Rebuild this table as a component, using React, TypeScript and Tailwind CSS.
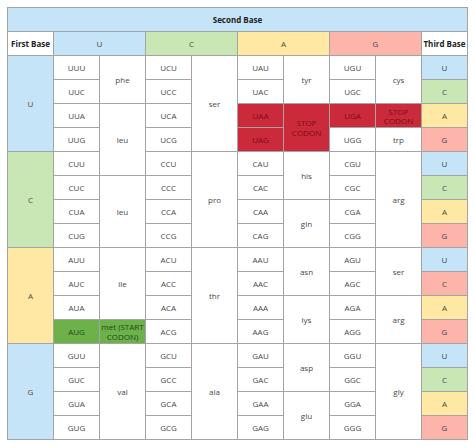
import React from "react";

const W = "bg-white";
const BL = "bg-[#c6e4f7]";
const GR = "bg-[#c9e6b5]";
const YE = "bg-[#fee8a4]";
const PK = "bg-[#fdb4aa]";
const RD = "bg-[#cb2a3a] text-[#7a0d18]";
const DG = "bg-[#6db14a] text-[#24451a]";

function C({ c = W, children }: { c?: string; children?: React.ReactNode }) {
  return (
    <div className={`flex items-center justify-center text-center px-[2px] leading-[10px] ${c}`}>
      {children}
    </div>
  );
}

export default function App() {
  return (
    <div className="w-[474px] h-[447px] bg-white p-[7px]" style={{ fontFamily: "'Open Sans', 'Liberation Sans', sans-serif" }}>
      <div className="grid grid-cols-[repeat(10,45px)] grid-rows-[repeat(18,23px)] gap-px p-px bg-[#a4a4a4] w-fit text-[8px] text-[#484848]">
        <div className={`col-span-10 flex items-center justify-center font-bold text-[#222] ${BL}`}>Second Base</div>
        <div className="flex items-center justify-center font-bold text-[#222] bg-white">First Base</div>
        <div className={`col-span-2 flex items-center justify-center ${BL}`}>U</div>
        <div className={`col-span-2 flex items-center justify-center ${GR}`}>C</div>
        <div className={`col-span-2 flex items-center justify-center ${YE}`}>A</div>
        <div className={`col-span-2 flex items-center justify-center ${PK}`}>G</div>
        <div className="flex items-center justify-center font-bold text-[#222] bg-white">Third Base</div>

        {/* U block */}
        <div className={`row-span-4 flex items-center justify-center ${BL}`}>U</div>
        <C>UUU</C>
        <div className="row-span-2 flex items-center justify-center bg-white">phe</div>
        <C>UCU</C>
        <div className="row-span-4 flex items-center justify-center bg-white">ser</div>
        <C>UAU</C>
        <div className="row-span-2 flex items-center justify-center bg-white">tyr</div>
        <C>UGU</C>
        <div className="row-span-2 flex items-center justify-center bg-white">cys</div>
        <C c={BL}>U</C>

        <C>UUC</C>
        <C>UCC</C>
        <C>UAC</C>
        <C>UGC</C>
        <C c={GR}>C</C>

        <C>UUA</C>
        <div className="row-span-3 flex items-center justify-center bg-white">leu</div>
        <C>UCA</C>
        <C c={RD}>UAA</C>
        <div className={`row-span-2 flex items-center justify-center text-center leading-[10px] px-[6px] ${RD}`}>STOP CODON</div>
        <C c={RD}>UGA</C>
        <div className={`flex items-center justify-center text-center leading-[9px] px-[2px] ${RD}`}>STOP CODON</div>
        <C c={YE}>A</C>

        <C>UUG</C>
        <C>UCG</C>
        <C c={RD}>UAG</C>
        <C>UGG</C>
        <C>trp</C>
        <C c={PK}>G</C>

        {/* C block */}
        <div className={`row-span-4 flex items-center justify-center ${GR}`}>C</div>
        <C>CUU</C>
        <C>CCU</C>
        <div className="row-span-4 flex items-center justify-center bg-white">pro</div>
        <C>CAU</C>
        <div className="row-span-2 flex items-center justify-center bg-white">his</div>
        <C>CGU</C>
        <div className="row-span-4 flex items-center justify-center bg-white">arg</div>
        <C c={BL}>U</C>

        <C>CUC</C>
        <div className="row-span-3 flex items-center justify-center bg-white">leu</div>
        <C>CCC</C>
        <C>CAC</C>
        <C>CGC</C>
        <C c={GR}>C</C>

        <C>CUA</C>
        <C>CCA</C>
        <C>CAA</C>
        <div className="row-span-2 flex items-center justify-center bg-white">gln</div>
        <C>CGA</C>
        <C c={YE}>A</C>

        <C>CUG</C>
        <C>CCG</C>
        <C>CAG</C>
        <C>CGG</C>
        <C c={PK}>G</C>

        {/* A block */}
        <div className={`row-span-4 flex items-center justify-center ${YE}`}>A</div>
        <C>AUU</C>
        <div className="row-span-3 flex items-center justify-center bg-white">ile</div>
        <C>ACU</C>
        <div className="row-span-4 flex items-center justify-center bg-white">thr</div>
        <C>AAU</C>
        <div className="row-span-2 flex items-center justify-center bg-white">asn</div>
        <C>AGU</C>
        <div className="row-span-2 flex items-center justify-center bg-white">ser</div>
        <C c={BL}>U</C>

        <C>AUC</C>
        <C>ACC</C>
        <C>AAC</C>
        <C>AGC</C>
        <C c={PK}>C</C>

        <C>AUA</C>
        <C>ACA</C>
        <C>AAA</C>
        <div className="row-span-2 flex items-center justify-center bg-white">lys</div>
        <C>AGA</C>
        <div className="row-span-2 flex items-center justify-center bg-white">arg</div>
        <C c={YE}>A</C>

        <C c={DG}>AUG</C>
        <div className={`flex items-center justify-center text-center leading-[10px] px-0 ${DG}`}>met (START CODON)</div>
        <C>ACG</C>
        <C>AAG</C>
        <C>AGG</C>
        <C c={PK}>G</C>

        {/* G block */}
        <div className={`row-span-4 flex items-center justify-center ${BL}`}>G</div>
        <C>GUU</C>
        <div className="row-span-4 flex items-center justify-center bg-white">val</div>
        <C>GCU</C>
        <div className="row-span-4 flex items-center justify-center bg-white">ala</div>
        <C>GAU</C>
        <div className="row-span-2 flex items-center justify-center bg-white">asp</div>
        <C>GGU</C>
        <div className="row-span-4 flex items-center justify-center bg-white">gly</div>
        <C c={BL}>U</C>

        <C>GUC</C>
        <C>GCC</C>
        <C>GAC</C>
        <C>GGC</C>
        <C c={GR}>C</C>

        <C>GUA</C>
        <C>GCA</C>
        <C>GAA</C>
        <div className="row-span-2 flex items-center justify-center bg-white">glu</div>
        <C>GGA</C>
        <C c={YE}>A</C>

        <C>GUG</C>
        <C>GCG</C>
        <C>GAG</C>
        <C>GGG</C>
        <C c={PK}>G</C>
      </div>
    </div>
  );
}
